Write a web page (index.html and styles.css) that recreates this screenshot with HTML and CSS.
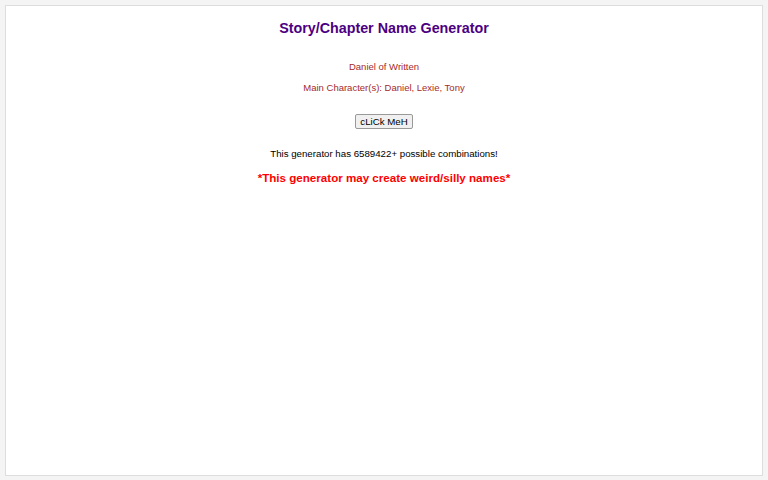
FILE: index.html
```html
<!DOCTYPE html>
<html lang="en">
<head>
    <meta charset="UTF-8">
    <title>Story/Chapter Name Generator</title>
    <link rel="stylesheet" href="styles.css">
</head>
<body>
    <div class="page">
        <h1>Story/Chapter Name Generator</h1>
        <p class="credit">Daniel of Written</p>
        <p class="credit">Main Character(s): Daniel, Lexie, Tony</p>
        <button class="gen-btn" onclick="generate()">cLiCk MeH</button>
        <p id="result" class="result"></p>
        <p class="count">This generator has 6589422+ possible combinations!</p>
        <p class="warning">*This generator may create weird/silly names*</p>
    </div>
    <script>
        var first = ['The', 'A', 'Broken', 'Silent', 'Lost'];
        var second = ['Shadow', 'Promise', 'Storm', 'Letter', 'Garden'];
        function generate() {
            var a = first[Math.floor(Math.random() * first.length)];
            var b = second[Math.floor(Math.random() * second.length)];
            document.getElementById('result').textContent = a + ' ' + b;
        }
    </script>
</body>
</html>
```

FILE: styles.css
```css
html {
    background: #f4f4f4;
}
body {
    margin: 0;
    padding: 5px;
    font-family: 'Liberation Sans', Arial, sans-serif;
}
.page {
    background: #fff;
    border: 1px solid #ddd;
    height: 471px;
    text-align: center;
    padding-top: 14px;
    box-sizing: border-box;
}
h1 {
    color: #4b0082;
    font-size: 14.3px;
    margin: 0 0 25px;
}
.credit {
    color: #a52a2a;
    font-size: 9.5px;
    margin: 0 0 10px;
}
.gen-btn {
    font-family: 'Liberation Sans', Arial, sans-serif;
    font-size: 9.7px;
    margin-top: 11px;
    padding: 1px 4px;
    background: #f0f0f0;
    border: 1px solid #999;
    border-radius: 2px;
}
.result {
    margin: 0;
}
.count {
    font-size: 9.7px;
    margin: 19px 0 12px;
}
.warning {
    color: #f00;
    font-size: 11.6px;
    font-weight: bold;
    margin: 0;
}
```
